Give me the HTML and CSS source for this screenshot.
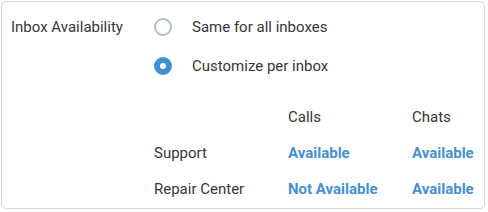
FILE: index.html
```html
<!DOCTYPE html>
<html lang="en">
  <head>
    <meta charset="UTF-8" />
    <title>Inbox Availability</title>
    <link rel="stylesheet" href="styles.css">
  </head>
  <body>
    <div class="card">
      <div class="label">Inbox Availability</div>
      <div class="options">
        <label class="option">
          <span class="radio"></span>
          <span>Same for all inboxes</span>
        </label>
        <label class="option">
          <span class="radio checked"></span>
          <span>Customize per inbox</span>
        </label>
        <div class="table">
          <div class="row head">
            <span class="name"></span>
            <span class="col">Calls</span>
            <span class="col">Chats</span>
          </div>
          <div class="row">
            <span class="name">Support</span>
            <a class="col link">Available</a>
            <a class="col link">Available</a>
          </div>
          <div class="row">
            <span class="name">Repair Center</span>
            <a class="col link">Not Available</a>
            <a class="col link">Available</a>
          </div>
        </div>
      </div>
    </div>
  </body>
</html>
```

FILE: styles.css
```css
body {
  margin: 0;
  padding: 1px;
  font-family: Roboto, "Liberation Sans", sans-serif;
  font-size: 15px;
  color: #363636;
  background: #fff;
}

.card {
  display: flex;
  width: 484px;
  height: 208px;
  box-sizing: border-box;
  border: 1px solid #d6d6d6;
  border-radius: 5px;
  padding: 8px 0 0 9px;
}

.label {
  flex-shrink: 0;
  width: 143px;
  line-height: 34px;
}

.options {
  flex: 1;
}

.option {
  display: flex;
  align-items: center;
  height: 34px;
  margin-bottom: 5px;
}

.radio {
  flex-shrink: 0;
  width: 18px;
  height: 18px;
  box-sizing: border-box;
  border: 2px solid #b5bec6;
  border-radius: 50%;
  margin-right: 20px;
}

.radio.checked {
  border: 6px solid #3f8fcf;
  background: #fff;
}

.table {
  margin-top: 17px;
}

.row {
  display: flex;
  height: 36px;
  line-height: 36px;
}

.row.head {
  height: 35px;
  line-height: 35px;
}

.name {
  width: 134px;
}

.col {
  width: 124px;
}

.col:last-child {
  width: auto;
}

.link {
  color: #4790cf;
  font-weight: bold;
}
```
